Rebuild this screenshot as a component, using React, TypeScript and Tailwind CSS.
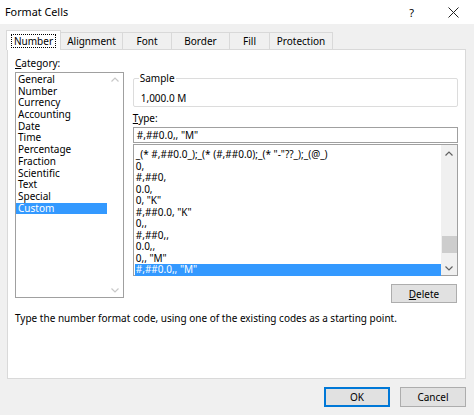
import React from "react";

const categories = [
  "General",
  "Number",
  "Currency",
  "Accounting",
  "Date",
  "Time",
  "Percentage",
  "Fraction",
  "Scientific",
  "Text",
  "Special",
  "Custom",
];

const types = [
  '_(* #,##0.0_);_(* (#,##0.0);_(* "-"??_);_(@_)',
  "0,",
  "#,##0,",
  "0.0,",
  '0, "K"',
  '#,##0.0, "K"',
  "0,,",
  "#,##0,,",
  "0.0,,",
  '0,, "M"',
  '#,##0.0,, "M"',
];

function Chevron({ up, color }: { up?: boolean; color: string }) {
  return (
    <svg width="8" height="5" viewBox="0 0 8 5">
      <polyline
        points={up ? "0.5,4.5 4,1 7.5,4.5" : "0.5,0.5 4,4 7.5,0.5"}
        fill="none"
        stroke={color}
        strokeWidth="1.2"
      />
    </svg>
  );
}

const tabs = ["Number", "Alignment", "Font", "Border", "Fill", "Protection"];
const tabWidths = ["w-[55px]", "w-[62px]", "w-[49px]", "w-[58px]", "w-[40px]", "w-[63px]"];

export default function App() {
  return (
    <div
      className="w-[474px] h-[415px] bg-[#f0f0f0] flex flex-col text-black overflow-hidden"
      style={{ fontFamily: '"Noto Sans", "Open Sans", sans-serif' }}
    >
      {/* Title bar */}
      <div className="h-[24px] bg-white flex items-center pl-[5px] pr-[15px] shrink-0">
        <span className="text-[10.8px] leading-none">Format Cells</span>
        <div className="ml-auto flex items-center gap-[34px]">
          <span className="text-[11px] leading-none">?</span>
          <svg width="11" height="11" viewBox="0 0 11 11">
            <path d="M0.5 0.5 L10.5 10.5 M10.5 0.5 L0.5 10.5" stroke="#222" strokeWidth="1" />
          </svg>
        </div>
      </div>

      {/* Tabs */}
      <div className="flex items-end pl-[6px] mt-[6px] h-[19px] relative z-10 text-[10px]">
        {tabs.map((t, i) =>
          i === 0 ? (
            <div
              key={t}
              className={`${tabWidths[i]} h-[20px] -mb-px bg-white border border-b-0 border-[#d9d9d9] flex items-center justify-center`}
            >
              <span className="border border-dotted border-black px-[2px] leading-[12px]">{t}</span>
            </div>
          ) : (
            <div
              key={t}
              className={`${tabWidths[i]} h-[17px] bg-[#f0f0f0] border border-l-0 border-b-0 border-[#d9d9d9] flex items-center justify-center leading-none`}
            >
              {t}
            </div>
          )
        )}
      </div>

      {/* Panel */}
      <div className="ml-[7px] w-[459px] h-[330px] bg-white border border-[#d9d9d9] px-[7px] pt-[7px] text-[10px] flex flex-col">
        <div className="flex gap-[9px]">
          {/* Left column */}
          <div className="w-[109px] flex flex-col">
            <div className="h-[15px] leading-[12px]">
              <span className="underline underline-offset-[1px]">C</span>ategory:
            </div>
            <div className="h-[226px] border border-[#a0a0a0] flex">
              <div className="flex-1 flex flex-col pt-[1px]">
                {categories.map((c) =>
                  c === "Custom" ? (
                    <div key={c} className="h-[11.7px] leading-[11.7px] bg-[#3399ff] text-white pl-[2px]">
                      {c}
                    </div>
                  ) : (
                    <div key={c} className="h-[11.7px] leading-[11.7px] pl-[2px]">
                      {c}
                    </div>
                  )
                )}
              </div>
              <div className="w-[16px] flex flex-col justify-between items-center py-[4px]">
                <Chevron up color="#c8c8c8" />
                <Chevron color="#c8c8c8" />
              </div>
            </div>
          </div>

          {/* Right column */}
          <div className="w-[326px] flex flex-col">
            <div className="relative mt-[21px] h-[29px] border border-[#dcdcdc] rounded-[2px]">
              <span className="absolute -top-[8px] left-[5px] bg-white px-[1px] leading-[14px]">Sample</span>
              <div className="pl-[7px] pt-[12px] leading-[14px]">1,000.0 M</div>
            </div>
            <div className="mt-[5px] h-[15px] leading-[12px]">
              <span className="underline underline-offset-[1px]">T</span>ype:
            </div>
            <div className="h-[16px] border border-[#a0a0a0] pl-[3px] leading-[14px]">#,##0.0,, "M"</div>
            <div className="h-[132px] mt-[1px] border border-[#a0a0a0] flex">
              <div className="flex-1 flex flex-col pt-[4px] pl-[1px]">
                {types.map((t, i) =>
                  i === types.length - 1 ? (
                    <div key={t} className="h-[11.5px] leading-[11.5px] bg-[#3399ff] text-white pl-[1px] whitespace-pre">
                      {t}
                    </div>
                  ) : (
                    <div key={t} className="h-[11.5px] leading-[11.5px] pl-[1px] whitespace-pre">
                      {t}
                    </div>
                  )
                )}
              </div>
              <div className="w-[16px] bg-[#f0f0f0] flex flex-col items-center">
                <div className="h-[16px] flex items-center justify-center">
                  <Chevron up color="#606060" />
                </div>
                <div className="flex-1 flex flex-col justify-end">
                  <div className="w-[15px] h-[17px] bg-[#cdcdcd] mb-[8px]" />
                </div>
                <div className="h-[14px] flex items-center justify-center">
                  <Chevron color="#606060" />
                </div>
              </div>
            </div>
            <div className="flex justify-end mt-[8px] pr-[1px]">
              <div className="w-[66px] h-[19px] bg-[#e1e1e1] border border-[#adadad] flex items-center justify-center leading-none">
                <span>
                  <span className="underline underline-offset-[1px]">D</span>elete
                </span>
              </div>
            </div>
          </div>
        </div>
        <div className="mt-[8px] leading-[14px]">
          Type the number format code, using one of the existing codes as a starting point.
        </div>
      </div>

      {/* Bottom buttons */}
      <div className="flex justify-end gap-[10px] pr-[8px] mt-[8px] text-[10px]">
        <div className="w-[66px] h-[20px] bg-[#e1e1e1] border-2 border-[#0078d7] flex items-center justify-center leading-none">
          OK
        </div>
        <div className="w-[66px] h-[20px] bg-[#e1e1e1] border border-[#adadad] flex items-center justify-center leading-none">
          Cancel
        </div>
      </div>
    </div>
  );
}
